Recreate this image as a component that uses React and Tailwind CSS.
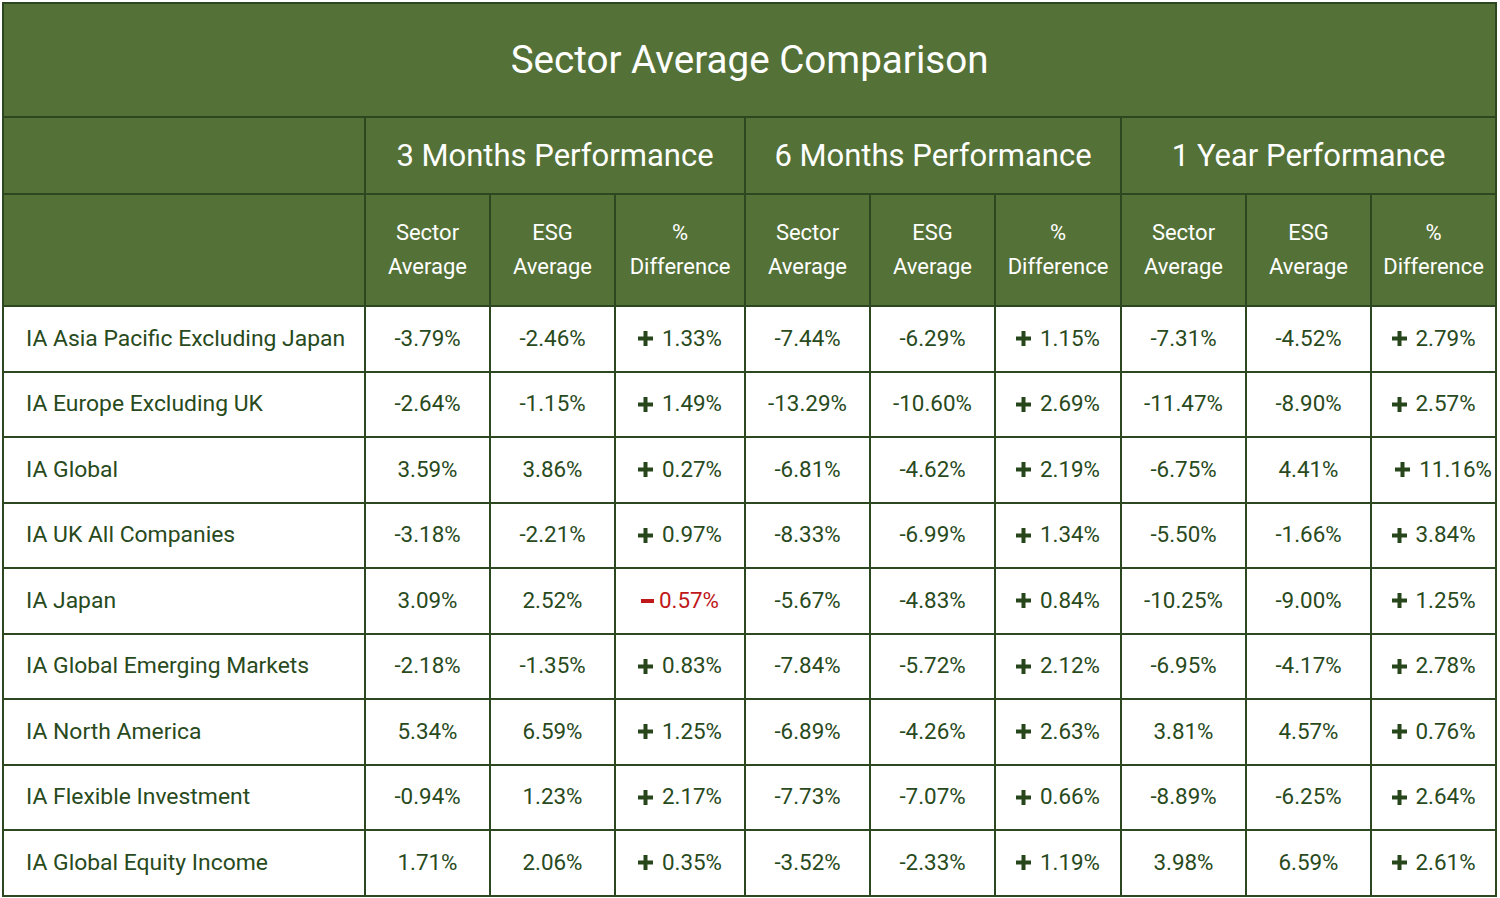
import React from "react";

const rows = [
  ["IA Asia Pacific Excluding Japan", "-3.79%", "-2.46%", "+1.33%", "-7.44%", "-6.29%", "+1.15%", "-7.31%", "-4.52%", "+2.79%"],
  ["IA Europe Excluding UK", "-2.64%", "-1.15%", "+1.49%", "-13.29%", "-10.60%", "+2.69%", "-11.47%", "-8.90%", "+2.57%"],
  ["IA Global", "3.59%", "3.86%", "+0.27%", "-6.81%", "-4.62%", "+2.19%", "-6.75%", "4.41%", "+11.16%"],
  ["IA UK All Companies", "-3.18%", "-2.21%", "+0.97%", "-8.33%", "-6.99%", "+1.34%", "-5.50%", "-1.66%", "+3.84%"],
  ["IA Japan", "3.09%", "2.52%", "-0.57%", "-5.67%", "-4.83%", "+0.84%", "-10.25%", "-9.00%", "+1.25%"],
  ["IA Global Emerging Markets", "-2.18%", "-1.35%", "+0.83%", "-7.84%", "-5.72%", "+2.12%", "-6.95%", "-4.17%", "+2.78%"],
  ["IA North America", "5.34%", "6.59%", "+1.25%", "-6.89%", "-4.26%", "+2.63%", "3.81%", "4.57%", "+0.76%"],
  ["IA Flexible Investment", "-0.94%", "1.23%", "+2.17%", "-7.73%", "-7.07%", "+0.66%", "-8.89%", "-6.25%", "+2.64%"],
  ["IA Global Equity Income", "1.71%", "2.06%", "+0.35%", "-3.52%", "-2.33%", "+1.19%", "3.98%", "6.59%", "+2.61%"],
];

const Plus = () => (
  <svg width="15" height="15" viewBox="0 0 15 15" className="inline-block mr-[9px] -mt-[3px] align-middle">
    <rect x="5.5" y="0" width="4" height="15" fill="#28461b" />
    <rect x="0" y="5.5" width="15" height="4" fill="#28461b" />
  </svg>
);

const Minus = () => (
  <svg width="13" height="14" viewBox="0 0 13 14" className="inline-block mr-[5px] -mt-[3px] align-middle">
    <rect x="0" y="5" width="13" height="4" fill="#c0181a" />
  </svg>
);

function Diff({ v }) {
  const neg = v.startsWith("-");
  const num = v.slice(1);
  return neg ? (
    <span className="text-[#c0181a] whitespace-nowrap">
      <Minus />
      {num}
    </span>
  ) : (
    <span className="whitespace-nowrap">
      <Plus />
      {num}
    </span>
  );
}

const headCell = "border-2 border-[#2d4720] text-white font-normal";

export default function App() {
  const groups = ["3 Months Performance", "6 Months Performance", "1 Year Performance"];
  return (
    <div className="bg-white w-[1500px] h-[898px] pt-[2px] pl-[2px]" style={{ fontFamily: "Roboto, 'Liberation Sans', sans-serif" }}>
      <table className="table-fixed border-collapse w-[1495px] border-2 border-[#2d4720] text-[#284a1c]">
        <colgroup>
          <col className="w-[362px]" />
          <col className="w-[125px]" />
          <col className="w-[125px]" />
          <col className="w-[130px]" />
          <col className="w-[125px]" />
          <col className="w-[125px]" />
          <col className="w-[126px]" />
          <col className="w-[125px]" />
          <col className="w-[125px]" />
          <col className="w-[125px]" />
        </colgroup>
        <thead className="bg-[#547137]">
          <tr className="h-[114px]">
            <th colSpan={10} className={`${headCell} text-[38.6px] leading-none`}>
              Sector Average Comparison
            </th>
          </tr>
          <tr className="h-[77px]">
            <th className={headCell}></th>
            {groups.map((g) => (
              <th key={g} colSpan={3} className={`${headCell} text-[31px] leading-none`}>
                {g}
              </th>
            ))}
          </tr>
          <tr className="h-[112px]">
            <th className={headCell}></th>
            {groups.map((g) => (
              <React.Fragment key={g}>
                <th className={`${headCell} text-[22px] leading-[34px]`}>
                  Sector
                  <br />
                  Average
                </th>
                <th className={`${headCell} text-[22px] leading-[34px]`}>
                  ESG
                  <br />
                  Average
                </th>
                <th className={`${headCell} text-[22px] leading-[34px]`}>
                  %
                  <br />
                  Difference
                </th>
              </React.Fragment>
            ))}
          </tr>
        </thead>
        <tbody className="text-[22.4px]">
          {rows.map((r) => (
            <tr key={r[0]} className="h-[65.5px]">
              <td className="border-2 border-[#2d4720] pl-[22px] whitespace-nowrap text-[22.9px]">{r[0]}</td>
              {r.slice(1).map((v, i) => (
                <td
                  key={i}
                  className={
                    v === "+11.16%"
                      ? "border-2 border-[#2d4720] text-center pl-[20px]"
                      : "border-2 border-[#2d4720] text-center"
                  }
                >
                  {i % 3 === 2 ? <Diff v={v} /> : v}
                </td>
              ))}
            </tr>
          ))}
        </tbody>
      </table>
    </div>
  );
}
